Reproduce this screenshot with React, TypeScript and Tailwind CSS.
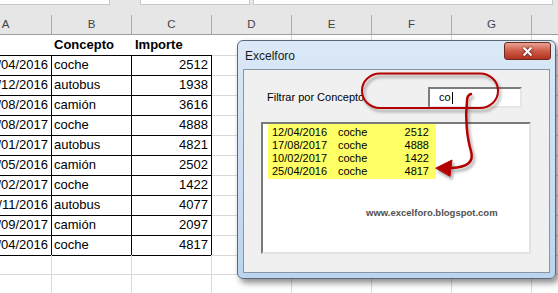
import { X } from 'lucide-react'

const rows = [
  ['12/04/2016', 'coche', '2512'],
  ['03/12/2016', 'autobus', '1938'],
  ['21/08/2016', 'camión', '3616'],
  ['17/08/2017', 'coche', '4888'],
  ['09/01/2017', 'autobus', '4821'],
  ['14/05/2016', 'camión', '2502'],
  ['10/02/2017', 'coche', '1422'],
  ['28/11/2016', 'autobus', '4077'],
  ['06/09/2017', 'camión', '2097'],
  ['25/04/2016', 'coche', '4817'],
]

const filtered = rows.filter((r) => r[1].startsWith('co'))

// H is off the right edge, so its header stays blank
const letters = ['A', 'B', 'C', 'D', 'E', 'F', 'G', '']
const grid = 'grid grid-cols-[92px_80px_80px_80px_80px_80px_80px_80px]'

function Sheet() {
  return (
    <div className="flex flex-col">
      {/* formula bar strip */}
      <div className="flex h-[15px] bg-[#e6e6e6]">
        <div className="h-[5px] w-[110px] border-b border-r border-[#c8c8c8] bg-white" />
        <div className="ml-[30px] h-[5px] w-[110px] border-b border-x border-[#c8c8c8] bg-white" />
        <div className="ml-[3px] h-[5px] w-[300px] border-b border-x border-[#c8c8c8] bg-white" />
      </div>
      <div className="-ml-[40px] w-[640px]">
        <div className={`${grid} h-[20px] border-b border-[#9e9e9e] bg-[#e6e6e6]`}>
          {letters.map((l, i) => (
            <div key={i} className="flex items-center justify-center border-r border-[#ababab] text-[11.5px] text-[#444]">{l}</div>
          ))}
        </div>
        <div className={`${grid} h-[20px]`}>
          <div className="border-b border-black" />
          <div className="flex items-center border-b border-black pl-[2px] text-[13px] font-bold">Concepto</div>
          <div className="flex items-center border-b border-black pl-[3px] text-[13px] font-bold">Importe</div>
          {[0, 1, 2, 3, 4].map((i) => <div key={i} className="border-b border-r border-[#d9d9d9]" />)}
        </div>
        {rows.map(([d, c, n]) => (
          <div key={d} className={`${grid} h-[20px] text-[13px]`}>
            <div className="flex items-center justify-end border-b border-r border-black pr-[3px]">{d}</div>
            <div className="flex items-center border-b border-r border-black pl-[2px]">{c}</div>
            <div className="flex items-center justify-end border-b border-r border-black pr-[3px]">{n}</div>
            {[0, 1, 2, 3, 4].map((i) => <div key={i} className="border-b border-r border-[#d9d9d9]" />)}
          </div>
        ))}
        {[0, 1].map((r) => (
          <div key={r} className={`${grid} h-[20px]`}>
            {letters.map((l, i) => <div key={i} className="border-b border-r border-[#d9d9d9]" />)}
          </div>
        ))}
      </div>
    </div>
  )
}

function Dialog() {
  return (
    <div className="absolute left-[237px] top-[40px] flex h-[239px] w-[319px] flex-col rounded-[6px] border border-[#5b6876] bg-gradient-to-b from-[#dbe9f7] to-[#bcd4ee] shadow-[3px_4px_6px_rgba(0,0,0,0.45)]">
      <div className="flex h-[28px] items-center pl-[7px] pt-[1px] text-[12px] text-[#1a1a1a]">Excelforo</div>
      <div className="absolute right-[4px] top-[1px] flex h-[18px] w-[47px] items-center justify-center rounded-[3px] border border-[#6b2a20] bg-gradient-to-b from-[#e7a295] via-[#cf5a46] to-[#b0321f]">
        <X size={13} strokeWidth={4} className="text-white drop-shadow-[0_0_1px_#3a0f0a]" />
      </div>
      <div className="mx-[5px] mb-[5px] flex flex-1 flex-col border border-[#8596a8] bg-[#f0f0f0]">
        <div className="mt-[17px] flex h-[21px] items-center">
          <div className="w-[184px] pl-[23px] text-[11px] text-black">Filtrar por Concepto</div>
          <div className="flex h-[21px] w-[94px] items-center border-2 border-b-[#e6e6e6] border-l-[#7c7c7c] border-r-[#e6e6e6] border-t-[#7c7c7c] bg-white pl-[9px] text-[11px]">
            co<span className="ml-[1px] h-[12px] w-px bg-black" />
          </div>
        </div>
        <div className="ml-[17px] mt-[14px] h-[132px] w-[270px] border-2 border-b-[#e3e3e3] border-l-[#7a7a7a] border-r-[#e3e3e3] border-t-[#7a7a7a] bg-white">
          <div className="ml-[5px] w-[168px] bg-[#ffff66] py-[1.5px] text-[11px] text-black">
            {filtered.map(([d, c, n]) => (
              <div key={d} className="flex h-[13px] items-center">
                <span className="w-[70px] pl-[4px]">{d}</span>
                <span className="w-[40px]">{c}</span>
                <span className="flex-1 pr-[7px] text-right">{n}</span>
              </div>
            ))}
          </div>
          <div className="mt-[27px] pl-[103px] text-[9.5px] font-bold text-[#505050]">www.excelforo.blogspot.com</div>
        </div>
      </div>
    </div>
  )
}

function Annotation() {
  return (
    <svg className="pointer-events-none absolute left-0 top-0" width={558} height={293} viewBox="0 0 558 293">
      <defs>
        <filter id="sh" x="-20%" y="-20%" width="140%" height="140%">
          <feDropShadow dx="2" dy="3" stdDeviation="1.5" floodColor="#000" floodOpacity="0.35" />
        </filter>
      </defs>
      <g filter="url(#sh)" stroke="#b30000" fill="none" strokeLinecap="round">
        <rect x={362} y={73.5} width={136} height={34.5} rx={18} ry={17} strokeWidth={2} />
        <path d="M 471 94 Q 467 95 467 101 C 465 118, 467 138, 471 151 C 474 162, 468 167, 451 168" strokeWidth={2.5} />
        <polygon points="436,168 452,160 450,176" fill="#b30000" stroke="#b30000" strokeWidth={1} strokeLinejoin="round" />
      </g>
    </svg>
  )
}

export default function App() {
  return (
    <div className="relative h-[293px] w-[558px] overflow-hidden bg-white font-['Liberation_Sans',Arial,sans-serif] text-black">
      <Sheet />
      <Dialog />
      <Annotation />
    </div>
  )
}
